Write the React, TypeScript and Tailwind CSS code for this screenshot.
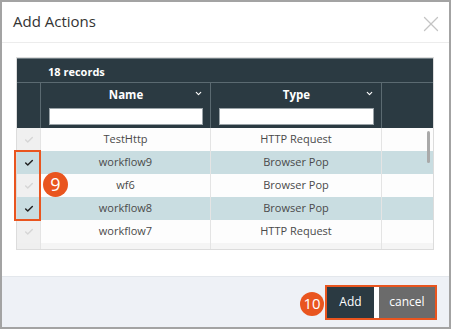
import { X, ChevronDown, Check } from "lucide-react";

const rows = [
  { name: "TestHttp", type: "HTTP Request", sel: false },
  { name: "workflow9", type: "Browser Pop", sel: true },
  { name: "wf6", type: "Browser Pop", sel: false },
  { name: "workflow8", type: "Browser Pop", sel: true },
  { name: "workflow7", type: "HTTP Request", sel: false },
];

function HeaderCell({ label }: { label: string }) {
  return (
    <div className="relative flex flex-col items-center border-l border-[#5b6a71] pl-[8px] pr-[7px] pt-[4px]">
      <span className="text-[11.5px] font-bold leading-[16px] text-white">{label}</span>
      <ChevronDown size={9} strokeWidth={3} className="absolute right-[7px] top-[6px] text-white" />
      <div className="mt-[5px] h-[17px] w-full border border-[#9aa3a8] bg-white" />
    </div>
  );
}

export default function App() {
  return (
    <div
      className="relative flex h-[329px] w-[451px] flex-col border-2 border-[#a3a3a3] bg-white"
      style={{ fontFamily: '"Open Sans", "Noto Sans", sans-serif' }}
    >
      {/* title bar */}
      <div className="flex h-[41px] items-center justify-between border-b border-[#ececec] pl-[11px] pr-[5px]">
        <span className="mt-[-2px] text-[15px] text-[#333]">Add Actions</span>
        <X size={26} strokeWidth={1.2} className="relative top-[2px] text-[#c4c4c4]" />
      </div>

      {/* body */}
      <div className="flex-1 px-[14px] pt-[14px]">
        <div className="w-[418px] border border-[#dcdcdc] text-[11px]">
          <div className="flex h-[24px] items-end border-t border-[#707d83] bg-[#2b3a42] pb-[2px] pl-[31px]">
            <span className="font-bold text-white">18 records</span>
          </div>
          <div className="grid h-[46px] grid-cols-[23px_170px_171px_52px] border-t border-[#5b6a71] bg-[#2b3a42]">
            <div />
            <HeaderCell label="Name" />
            <HeaderCell label="Type" />
            <div className="border-l border-[#5b6a71]" />
          </div>
          <div className="relative">
            {rows.map((r) => (
              <div
                key={r.name}
                className={`grid h-[23px] grid-cols-[23px_170px_171px_52px] text-[#4a4a4a] ${r.sel ? "bg-[#c9dde1]" : "bg-[#fdfdfd]"}`}
              >
                <div className={`flex items-center justify-center ${r.sel ? "" : "bg-[#f0f0f0]"}`}>
                  <Check size={10} strokeWidth={3.5} className={r.sel ? "text-[#222]" : "text-[#d6d6d6]"} />
                </div>
                <div className="flex items-center justify-center border-l border-[#e4e4e4]">{r.name}</div>
                <div className="flex items-center justify-center border-l border-[#e4e4e4]">{r.type}</div>
                <div className="border-l border-[#e4e4e4]" />
              </div>
            ))}
            <div className="grid h-[6px] grid-cols-[23px_170px_171px_52px] bg-[#f5f5f5]">
              <div className="bg-[#efefef]" />
              <div className="border-l border-[#e4e4e4]" />
              <div className="border-l border-[#e4e4e4]" />
              <div className="border-l border-[#e4e4e4]" />
            </div>
            {/* scrollbar */}
            <div className="absolute right-[3px] top-[3px] h-[32px] w-[3px] rounded bg-[#a9a9a9]" />
          </div>
        </div>
      </div>

      {/* footer */}
      <div className="flex h-[51px] items-center justify-end border-t border-[#e3e7ec] bg-[#eef1f6] pr-[12px]">
        <div className="relative flex gap-[5px] border-2 border-[#e9551f] bg-white">
          <span className="absolute left-[-27px] top-[5px] flex h-[24px] w-[24px] items-center justify-center rounded-full bg-[#e9551f] text-[15px] text-white">
            10
          </span>
          <button className="h-[31px] w-[47px] bg-[#2b3a42] text-[12px] text-white">Add</button>
          <button className="h-[31px] w-[56px] bg-[#6b6b6b] text-[12px] text-white">cancel</button>
        </div>
      </div>

      {/* annotation 9 */}
      <div className="absolute left-[12px] top-[148px] h-[71px] w-[27px] border-2 border-[#e9551f]" />
      <span className="absolute left-[41px] top-[170px] flex h-[25px] w-[25px] items-center justify-center rounded-full bg-[#e9551f] text-[18px] text-white">
        9
      </span>
    </div>
  );
}
